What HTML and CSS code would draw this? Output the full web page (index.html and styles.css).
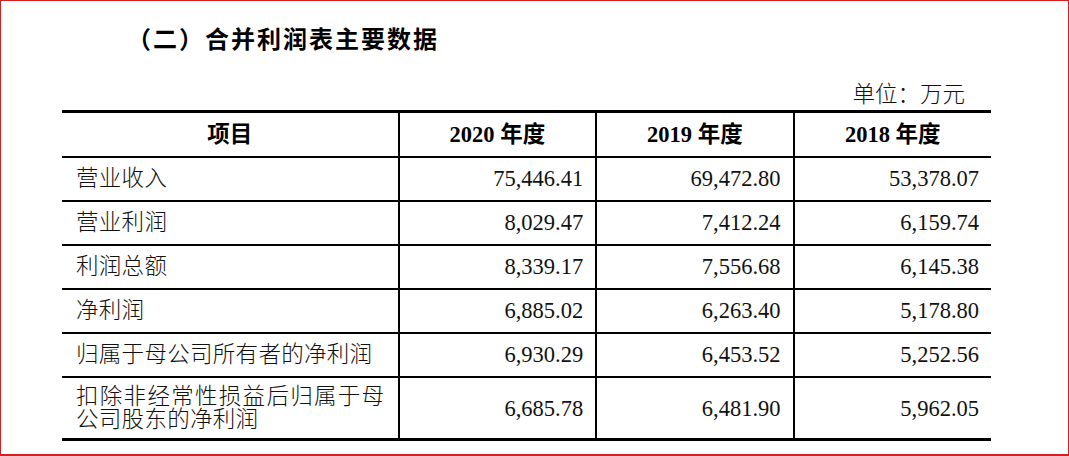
FILE: index.html
```html
<!DOCTYPE html>
<html lang="zh-CN">
<head>
<meta charset="utf-8">
<title>合并利润表主要数据</title>
<link rel="stylesheet" href="styles.css">
</head>
<body>
<div class="page">
  <h2 class="title">（二）合并利润表主要数据</h2>
  <div class="unit">单位：万元</div>
  <table class="data">
    <colgroup>
      <col class="c-item">
      <col class="c-year">
      <col class="c-year">
      <col class="c-year">
    </colgroup>
    <thead>
      <tr>
        <th>项目</th>
        <th>2020 年度</th>
        <th>2019 年度</th>
        <th>2018 年度</th>
      </tr>
    </thead>
    <tbody>
      <tr><td class="label">营业收入</td><td class="num">75,446.41</td><td class="num">69,472.80</td><td class="num">53,378.07</td></tr>
      <tr><td class="label">营业利润</td><td class="num">8,029.47</td><td class="num">7,412.24</td><td class="num">6,159.74</td></tr>
      <tr><td class="label">利润总额</td><td class="num">8,339.17</td><td class="num">7,556.68</td><td class="num">6,145.38</td></tr>
      <tr><td class="label">净利润</td><td class="num">6,885.02</td><td class="num">6,263.40</td><td class="num">5,178.80</td></tr>
      <tr><td class="label">归属于母公司所有者的净利润</td><td class="num">6,930.29</td><td class="num">6,453.52</td><td class="num">5,252.56</td></tr>
      <tr class="tall"><td class="label"><span class="justify">扣除非经常性损益后归属于母</span><br>公司股东的净利润</td><td class="num">6,685.78</td><td class="num">6,481.90</td><td class="num">5,962.05</td></tr>
    </tbody>
  </table>
</div>
</body>
</html>
```
FILE: styles.css
```css
html, body {
  margin: 0;
  padding: 0;
  background: #ffffff;
}

.page {
  box-sizing: border-box;
  width: 1069px;
  height: 456px;
  border: 1px solid #d21f1f;
  border-bottom-width: 2px;
  background: #ffffff;
  color: #111111;
  font-family: "Liberation Serif", "Noto Sans CJK SC", serif;
}

.title {
  margin: 0;
  padding: 25px 0 0 126px;
  font-family: "Noto Sans CJK SC", sans-serif;
  font-weight: 700;
  font-size: 24px;
  line-height: 24px;
  letter-spacing: 2px;
  color: #000000;
}

.unit {
  margin: 33px 0 0 61px;
  width: 929px;
  box-sizing: border-box;
  padding-right: 26px;
  text-align: right;
  font-size: 22.5px;
  line-height: 24px;
  font-weight: 300;
}

.data {
  margin: 3px 0 0 61px;
  width: 929px;
  table-layout: fixed;
  border-collapse: collapse;
  font-size: 22.5px;
  border-top: 3px solid #000;
  border-bottom: 3px solid #000;
}

.c-item { width: 336px; }
.c-year { width: 197px; }

.data th,
.data td {
  border: 2px solid #000;
  height: 42px;
  padding: 0 12px;
  vertical-align: middle;
  line-height: 24px;
}

.data thead th { height: 43px; }

.data tr > :first-child { border-left: none; }
.data tr > :last-child { border-right: none; }
.data thead th { border-top: none; }
.data tbody tr:last-child td { border-bottom: none; }

.data th {
  font-weight: 700;
  text-align: center;
  color: #000;
}

.data td.label {
  text-align: left;
  padding-left: 14px;
  font-weight: 300;
  letter-spacing: 0.3px;
}

.data td.label .justify {
  letter-spacing: 1.3px;
}

.data td.num {
  text-align: right;
  padding-right: 12px;
}

.data tr.tall td {
  height: 60px;
  line-height: 23px;
}
```
